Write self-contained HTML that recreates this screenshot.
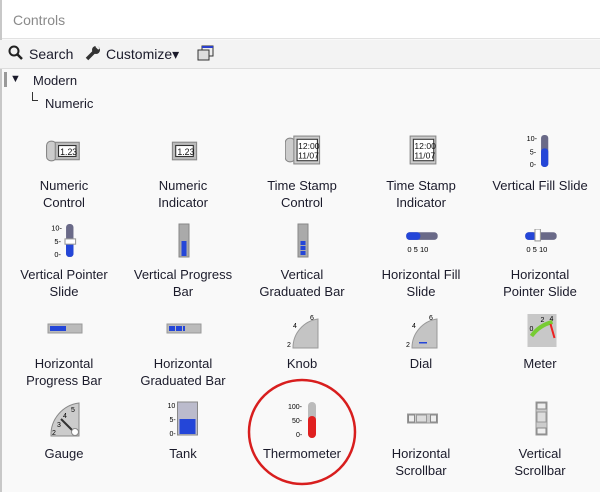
<!DOCTYPE html>
<html><head><style>
*{margin:0;padding:0;box-sizing:border-box}
body{width:600px;height:492px;overflow:hidden;background:#f9f9f9;font-family:"Liberation Sans",sans-serif;color:#1b1b2b;position:relative}
.a{position:absolute}
.lbl{position:absolute;width:118px;text-align:center;font-size:13px;line-height:17px}
.sm{font-size:7px;font-family:"Liberation Sans",sans-serif;color:#222}
</style></head><body>
<div class="a" style="left:0;top:0;width:600px;height:39px;background:#fff;border-bottom:1px solid #e2e2e2"></div>
<div class="a" style="left:0;top:0;width:2px;height:492px;background:#c8c8c8"></div>
<div class="a" style="left:13px;top:12px;font-size:14px;color:#8a8a8a">Controls</div>
<div class="a" style="left:0;top:40px;width:600px;height:29px;background:#f3f3f3;border-bottom:1px solid #ddd"></div>
<svg class="a" style="left:8px;top:44px" width="16" height="18"><circle cx="6" cy="7" r="4.5" fill="none" stroke="#222" stroke-width="2"/><path d="M9 10 L14 15" stroke="#222" stroke-width="2.5"/></svg>
<div class="a" style="left:29px;top:46px;font-size:14px">Search</div>
<svg class="a" style="left:84px;top:44px" width="18" height="18"><path d="M3 15 L10 8" stroke="#333" stroke-width="3.5"/><circle cx="12" cy="6" r="4" fill="#333"/><path d="M12 2 L15 5" stroke="#f3f3f3" stroke-width="2"/></svg>
<div class="a" style="left:106px;top:46px;font-size:14px">Customize▾</div>
<svg class="a" style="left:197px;top:45px" width="18" height="17"><rect x="5" y="1" width="11" height="10" fill="#eee" stroke="#333"/><rect x="5" y="1" width="11" height="2" fill="#2a3fcc"/><rect x="1" y="5" width="11" height="10" fill="#ddd" stroke="#333"/></svg>
<div class="a" style="left:4px;top:72px;width:3px;height:15px;background:#999"></div>
<div class="a" style="left:10px;top:73px;font-size:11px">▼</div>
<div class="a" style="left:33px;top:73px;font-size:13px">Modern</div>
<div class="a" style="left:32px;top:92px;width:6px;height:9px;border-left:1px solid #333;border-bottom:1px solid #333"></div>
<div class="a" style="left:45px;top:96px;font-size:13px">Numeric</div>

<!-- row1 -->
<svg class="a" style="left:46px;top:139px" width="36" height="24" viewBox="0 0 32 22"><rect x="0" y="2" width="9" height="18" rx="4" fill="#ccc" stroke="#888"/><rect x="8" y="3" width="22" height="16" fill="#bbb" stroke="#888"/><rect x="11" y="6" width="16" height="10" fill="#fff" stroke="#333"/><text x="12.5" y="14.5" font-size="8" fill="#111">1.23</text></svg>
<svg class="a" style="left:171px;top:140px" width="27" height="22" viewBox="0 0 24 20"><rect x="1" y="2" width="22" height="16" fill="#bbb" stroke="#888"/><rect x="4" y="5" width="16" height="10" fill="#fff" stroke="#333"/><text x="5.5" y="13.5" font-size="8" fill="#111">1.23</text></svg>
<svg class="a" style="left:285px;top:135px" width="37" height="30" viewBox="0 0 34 28"><rect x="0" y="3" width="9" height="22" rx="4" fill="#ccc" stroke="#888"/><rect x="8" y="1" width="24" height="26" fill="#ccc" stroke="#888"/><rect x="11" y="4" width="19" height="20" fill="#fff" stroke="#333"/><text x="12" y="13" font-size="8" fill="#111">12:00</text><text x="12" y="22" font-size="8" fill="#111">11/07</text></svg>
<svg class="a" style="left:409px;top:135px" width="28" height="30" viewBox="0 0 26 28"><rect x="1" y="1" width="24" height="26" fill="#ccc" stroke="#888"/><rect x="4" y="4" width="19" height="20" fill="#fff" stroke="#333"/><text x="5" y="13" font-size="8" fill="#111">12:00</text><text x="5" y="22" font-size="8" fill="#111">11/07</text></svg>
<svg class="a" style="left:526px;top:134px" width="26" height="35" viewBox="0 0 24 34"><text x="0" y="7" class="sm">10-</text><text x="3" y="20" class="sm">5-</text><text x="3" y="32" class="sm">0-</text><rect x="14" y="1" width="7" height="31" rx="3" fill="#6a6a88"/><rect x="14" y="14" width="7" height="18" rx="3" fill="#2446d8"/></svg>
<!-- row2 -->
<svg class="a" style="left:51px;top:223px" width="28" height="36" viewBox="0 0 26 34"><text x="0" y="7" class="sm">10-</text><text x="3" y="20" class="sm">5-</text><text x="3" y="32" class="sm">0-</text><rect x="14" y="1" width="7" height="31" rx="3" fill="#6a6a88"/><rect x="14" y="17" width="7" height="15" rx="3" fill="#2446d8"/><rect x="13" y="15" width="10" height="5" fill="#fff" stroke="#999"/></svg>
<svg class="a" style="left:178px;top:223px" width="13" height="36"><rect x="1" y="1" width="10" height="33" fill="#aaa" stroke="#888"/><rect x="3.5" y="18" width="5" height="15" fill="#2446d8"/></svg>
<svg class="a" style="left:297px;top:223px" width="13" height="36"><rect x="1" y="1" width="10" height="33" fill="#aaa" stroke="#888"/><rect x="3.5" y="18" width="5" height="4" fill="#2446d8"/><rect x="3.5" y="23" width="5" height="4" fill="#2446d8"/><rect x="3.5" y="28" width="5" height="4" fill="#2446d8"/></svg>
<svg class="a" style="left:405px;top:229px" width="35" height="26" viewBox="0 0 32 24"><rect x="1" y="3" width="29" height="7" rx="3" fill="#6a6a88"/><rect x="1" y="3" width="13" height="7" rx="3" fill="#2446d8"/><text x="2" y="21" class="sm">0  5  10</text></svg>
<svg class="a" style="left:524px;top:229px" width="35" height="26" viewBox="0 0 32 24"><rect x="1" y="3" width="29" height="7" rx="3" fill="#6a6a88"/><rect x="1" y="3" width="10" height="7" rx="3" fill="#2446d8"/><rect x="10" y="0" width="5" height="11" fill="#fff" stroke="#999"/><text x="2" y="21" class="sm">0  5  10</text></svg>
<!-- row3 -->
<svg class="a" style="left:47px;top:323px" width="36" height="12"><rect x="1" y="1" width="34" height="9" fill="#bbb" stroke="#999"/><rect x="3" y="3" width="16" height="5" fill="#2446d8"/></svg>
<svg class="a" style="left:166px;top:323px" width="36" height="12"><rect x="1" y="1" width="34" height="9" fill="#bbb" stroke="#999"/><rect x="3" y="3" width="6" height="5" fill="#2446d8"/><rect x="10" y="3" width="6" height="5" fill="#2446d8"/><rect x="17" y="3" width="2" height="5" fill="#2446d8"/></svg>
<svg class="a" style="left:285px;top:313px" width="36" height="36" viewBox="0 0 32 36"><path d="M31 35 L31 6 A29 29 0 0 0 6 35 Z" fill="#c4c4c4" stroke="#999"/><text x="23" y="7" class="sm">6</text><text x="6" y="15" class="sm">4</text><text x="0" y="34" class="sm">2</text></svg>
<svg class="a" style="left:404px;top:313px" width="36" height="36" viewBox="0 0 32 36"><path d="M31 35 L31 6 A29 29 0 0 0 6 35 Z" fill="#c4c4c4" stroke="#999"/><text x="23" y="7" class="sm">6</text><text x="6" y="15" class="sm">4</text><text x="0" y="34" class="sm">2</text><rect x="13" y="29" width="8" height="1.5" fill="#2446d8"/></svg>
<svg class="a" style="left:525px;top:313px" width="35" height="35" viewBox="0 0 30 35"><rect x="0" y="1" width="29" height="33" fill="#c8c8c8"/><path d="M4 23 Q12 12 25 9" stroke="#7c3" stroke-width="4" fill="none"/><path d="M23 11 L27 25" stroke="#e22" stroke-width="2"/><text x="2" y="18" class="sm">0</text><text x="13" y="9" class="sm">2</text><text x="22" y="8" class="sm">4</text></svg>
<!-- row4 -->
<svg class="a" style="left:47px;top:401px" width="36" height="36" viewBox="0 0 32 36"><path d="M30 35 L30 2 A32 32 0 0 0 2 35 Z" fill="#ccc" stroke="#888"/><path d="M12 18 L24 30" stroke="#333" stroke-width="2"/><circle cx="26" cy="31" r="3.5" fill="#fff" stroke="#888"/><text x="22" y="11" class="sm">5</text><text x="14" y="17" class="sm">4</text><text x="8" y="26" class="sm">3</text><text x="3" y="34" class="sm">2</text></svg>
<svg class="a" style="left:166px;top:401px" width="35" height="36" viewBox="0 0 32 36"><text x="0" y="7" class="sm">10</text><text x="2" y="21" class="sm">5-</text><text x="2" y="35" class="sm">0-</text><rect x="10" y="1" width="20" height="33" fill="#bbc" stroke="#888"/><rect x="12" y="18" width="16" height="15" fill="#2446d8"/></svg>
<svg class="a" style="left:287px;top:401px" width="32" height="38" viewBox="0 0 30 38"><text x="0" y="8" class="sm">100-</text><text x="4" y="22" class="sm">50-</text><text x="8" y="36" class="sm">0-</text><rect x="20" y="1" width="8" height="36" rx="4" fill="#bbb"/><rect x="20" y="15" width="8" height="22" rx="4" fill="#e02020"/></svg>
<svg class="a" style="left:405px;top:413px" width="35" height="12" viewBox="0 0 32 12"><rect x="1" y="1" width="30" height="9" fill="#ccc" stroke="#999"/><rect x="2" y="2" width="6" height="7" fill="#eee" stroke="#888"/><rect x="24" y="2" width="6" height="7" fill="#eee" stroke="#888"/><rect x="10" y="2" width="10" height="7" fill="#ddd" stroke="#999"/></svg>
<svg class="a" style="left:535px;top:401px" width="13" height="36"><rect x="1" y="1" width="11" height="33" fill="#ccc" stroke="#999"/><rect x="2" y="2" width="9" height="6" fill="#eee" stroke="#888"/><rect x="2" y="27" width="9" height="6" fill="#eee" stroke="#888"/><rect x="2" y="11" width="9" height="10" fill="#ddd" stroke="#999"/></svg>

<div class="lbl" style="left:5px;top:177px">Numeric<br>Control</div>
<div class="lbl" style="left:124px;top:177px">Numeric<br>Indicator</div>
<div class="lbl" style="left:243px;top:177px">Time Stamp<br>Control</div>
<div class="lbl" style="left:362px;top:177px">Time Stamp<br>Indicator</div>
<div class="lbl" style="left:481px;top:177px">Vertical Fill Slide</div>
<div class="lbl" style="left:5px;top:266px">Vertical Pointer<br>Slide</div>
<div class="lbl" style="left:124px;top:266px">Vertical Progress<br>Bar</div>
<div class="lbl" style="left:243px;top:266px">Vertical<br>Graduated Bar</div>
<div class="lbl" style="left:362px;top:266px">Horizontal Fill<br>Slide</div>
<div class="lbl" style="left:481px;top:266px">Horizontal<br>Pointer Slide</div>
<div class="lbl" style="left:5px;top:355px">Horizontal<br>Progress Bar</div>
<div class="lbl" style="left:124px;top:355px">Horizontal<br>Graduated Bar</div>
<div class="lbl" style="left:243px;top:355px">Knob</div>
<div class="lbl" style="left:362px;top:355px">Dial</div>
<div class="lbl" style="left:481px;top:355px">Meter</div>
<div class="lbl" style="left:5px;top:445px">Gauge</div>
<div class="lbl" style="left:124px;top:445px">Tank</div>
<div class="lbl" style="left:243px;top:445px">Thermometer</div>
<div class="lbl" style="left:362px;top:445px">Horizontal<br>Scrollbar</div>
<div class="lbl" style="left:481px;top:445px">Vertical<br>Scrollbar</div>
<svg class="a" style="left:244px;top:376px" width="116" height="112"><ellipse cx="58" cy="56" rx="53" ry="52" fill="none" stroke="#d81e1e" stroke-width="2.5"/></svg>
</body></html>
